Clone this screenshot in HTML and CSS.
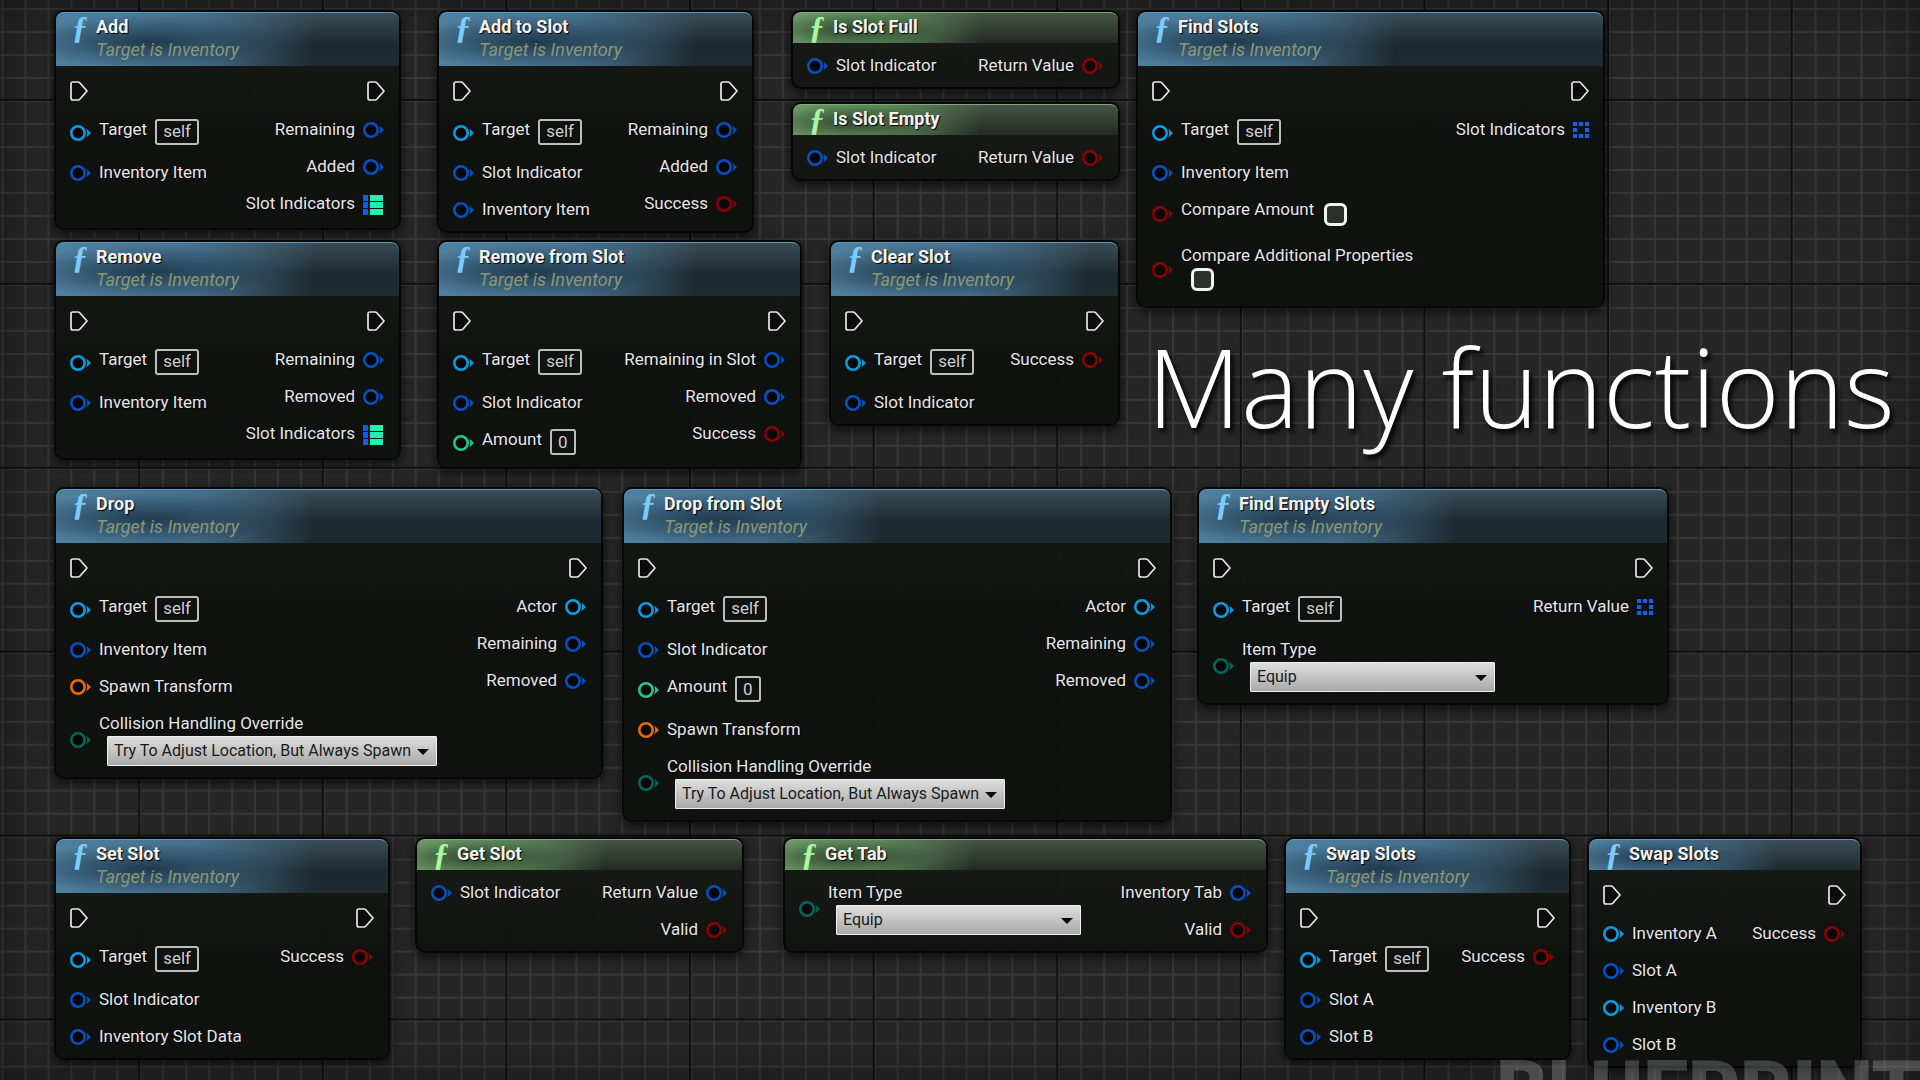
FILE: index.html
```html
<!DOCTYPE html>
<html lang="en">

<head>
    <meta charset="UTF-8">
    <meta name="viewport" content="width=device-width, initial-scale=1.0">
    <title>Inventory Blueprint Functions</title>
    <link rel="stylesheet" href="styles.css">
</head>

<body>

    <!-- shared pin shapes -->
    <svg class="defs" aria-hidden="true">
        <symbol id="exec" viewBox="0 0 18 20">
            <path d="M3 1 H8 Q9 1 10 2 L17 10 L10 18 Q9 19 8 19 H3 Q1 19 1 17 V3 Q1 1 3 1 Z" fill="#0b0c0b" stroke="currentColor" stroke-width="1.7" stroke-linejoin="round"/>
        </symbol>
        <symbol id="pin" viewBox="0 0 21 16">
            <circle cx="8" cy="8" r="6.7" fill="#050606" stroke="currentColor" stroke-width="2.6"/>
            <path d="M16.4 3.6 L21 8 L16.4 12.4 Q18 8 16.4 3.6 Z" fill="currentColor"/>
        </symbol>
        <symbol id="array" viewBox="0 0 16 16">
            <path d="M0 0h4v4h-4z M6 0h4v4h-4z M12 0h4v4h-4z M0 6h4v4h-4z M12 6h4v4h-4z M0 12h4v4h-4z M6 12h4v4h-4z M12 12h4v4h-4z" fill="currentColor"/>
        </symbol>
        <symbol id="map" viewBox="0 0 20 20">
            <path d="M0 0h5v6h-5z M0 7h5v6h-5z M0 14h5v6h-5z" fill="#0b5cf0"/>
            <path d="M7 0h13v6h-13z M7 7h13v6h-13z M7 14h13v6h-13z" fill="#20efb2"/>
        </symbol>
    </svg>

    <main class="graph">

        <svg class="grid" aria-hidden="true">
            <defs>
                <pattern id="minor" x="1.55" y="8.05" width="22.95" height="22.99" patternUnits="userSpaceOnUse">
                    <path d="M0 1 H23 M1 0 V23" stroke="#373737" stroke-width="2"/>
                </pattern>
                <pattern id="major" x="-45.3" y="-84.9" width="183.6" height="183.9" patternUnits="userSpaceOnUse">
                    <path d="M0 1 H184 M1 0 V184" stroke="#101010" stroke-width="2"/>
                </pattern>
            </defs>
            <rect width="100%" height="100%" fill="url(#minor)"/>
            <rect width="100%" height="100%" fill="url(#major)"/>
        </svg>

        <section class="node add">
            <header><i>ƒ</i><h2>Add</h2><p>Target is Inventory</p></header>
            <div class="pins">
                <ul class="in">
                    <li class="exec"><svg><use href="#exec"/></svg></li>
                    <li class="value"><svg class="pin object"><use href="#pin"/></svg><span>Target</span><b>self</b></li>
                    <li><svg class="pin struct"><use href="#pin"/></svg><span>Inventory Item</span></li>
                </ul>
                <ul class="out">
                    <li class="exec"><svg><use href="#exec"/></svg></li>
                    <li><span>Remaining</span><svg class="pin struct"><use href="#pin"/></svg></li>
                    <li><span>Added</span><svg class="pin struct"><use href="#pin"/></svg></li>
                    <li><span>Slot Indicators</span><svg class="map"><use href="#map"/></svg></li>
                </ul>
            </div>
        </section>

        <section class="node add-to-slot">
            <header><i>ƒ</i><h2>Add to Slot</h2><p>Target is Inventory</p></header>
            <div class="pins">
                <ul class="in">
                    <li class="exec"><svg><use href="#exec"/></svg></li>
                    <li class="value"><svg class="pin object"><use href="#pin"/></svg><span>Target</span><b>self</b></li>
                    <li><svg class="pin struct"><use href="#pin"/></svg><span>Slot Indicator</span></li>
                    <li><svg class="pin struct"><use href="#pin"/></svg><span>Inventory Item</span></li>
                </ul>
                <ul class="out">
                    <li class="exec"><svg><use href="#exec"/></svg></li>
                    <li><span>Remaining</span><svg class="pin struct"><use href="#pin"/></svg></li>
                    <li><span>Added</span><svg class="pin struct"><use href="#pin"/></svg></li>
                    <li><span>Success</span><svg class="pin bool"><use href="#pin"/></svg></li>
                </ul>
            </div>
        </section>

        <section class="node pure is-slot-full">
            <header><i>ƒ</i><h2>Is Slot Full</h2></header>
            <div class="pins">
                <ul class="in">
                    <li><svg class="pin struct"><use href="#pin"/></svg><span>Slot Indicator</span></li>
                </ul>
                <ul class="out">
                    <li><span>Return Value</span><svg class="pin bool"><use href="#pin"/></svg></li>
                </ul>
            </div>
        </section>

        <section class="node pure is-slot-empty">
            <header><i>ƒ</i><h2>Is Slot Empty</h2></header>
            <div class="pins">
                <ul class="in">
                    <li><svg class="pin struct"><use href="#pin"/></svg><span>Slot Indicator</span></li>
                </ul>
                <ul class="out">
                    <li><span>Return Value</span><svg class="pin bool"><use href="#pin"/></svg></li>
                </ul>
            </div>
        </section>

        <section class="node find-slots">
            <header><i>ƒ</i><h2>Find Slots</h2><p>Target is Inventory</p></header>
            <div class="pins">
                <ul class="in">
                    <li class="exec"><svg><use href="#exec"/></svg></li>
                    <li class="value"><svg class="pin object"><use href="#pin"/></svg><span>Target</span><b>self</b></li>
                    <li><svg class="pin struct"><use href="#pin"/></svg><span>Inventory Item</span></li>
                    <li class="check"><svg class="pin bool"><use href="#pin"/></svg><label for="compare-amount">Compare Amount</label><input type="checkbox" id="compare-amount"></li>
                    <li class="stacked"><svg class="pin bool"><use href="#pin"/></svg>
                        <div class="field"><label for="compare-props">Compare Additional Properties</label><input type="checkbox" id="compare-props"></div>
                    </li>
                </ul>
                <ul class="out">
                    <li class="exec"><svg><use href="#exec"/></svg></li>
                    <li><span>Slot Indicators</span><svg class="array"><use href="#array"/></svg></li>
                </ul>
            </div>
        </section>

        <section class="node remove">
            <header><i>ƒ</i><h2>Remove</h2><p>Target is Inventory</p></header>
            <div class="pins">
                <ul class="in">
                    <li class="exec"><svg><use href="#exec"/></svg></li>
                    <li class="value"><svg class="pin object"><use href="#pin"/></svg><span>Target</span><b>self</b></li>
                    <li><svg class="pin struct"><use href="#pin"/></svg><span>Inventory Item</span></li>
                </ul>
                <ul class="out">
                    <li class="exec"><svg><use href="#exec"/></svg></li>
                    <li><span>Remaining</span><svg class="pin struct"><use href="#pin"/></svg></li>
                    <li><span>Removed</span><svg class="pin struct"><use href="#pin"/></svg></li>
                    <li><span>Slot Indicators</span><svg class="map"><use href="#map"/></svg></li>
                </ul>
            </div>
        </section>

        <section class="node remove-from-slot">
            <header><i>ƒ</i><h2>Remove from Slot</h2><p>Target is Inventory</p></header>
            <div class="pins">
                <ul class="in">
                    <li class="exec"><svg><use href="#exec"/></svg></li>
                    <li class="value"><svg class="pin object"><use href="#pin"/></svg><span>Target</span><b>self</b></li>
                    <li><svg class="pin struct"><use href="#pin"/></svg><span>Slot Indicator</span></li>
                    <li class="value"><svg class="pin int"><use href="#pin"/></svg><label for="remove-amount">Amount</label><input type="text" id="remove-amount" value="0"></li>
                </ul>
                <ul class="out">
                    <li class="exec"><svg><use href="#exec"/></svg></li>
                    <li><span>Remaining in Slot</span><svg class="pin struct"><use href="#pin"/></svg></li>
                    <li><span>Removed</span><svg class="pin struct"><use href="#pin"/></svg></li>
                    <li><span>Success</span><svg class="pin bool"><use href="#pin"/></svg></li>
                </ul>
            </div>
        </section>

        <section class="node clear-slot">
            <header><i>ƒ</i><h2>Clear Slot</h2><p>Target is Inventory</p></header>
            <div class="pins">
                <ul class="in">
                    <li class="exec"><svg><use href="#exec"/></svg></li>
                    <li class="value"><svg class="pin object"><use href="#pin"/></svg><span>Target</span><b>self</b></li>
                    <li><svg class="pin struct"><use href="#pin"/></svg><span>Slot Indicator</span></li>
                </ul>
                <ul class="out">
                    <li class="exec"><svg><use href="#exec"/></svg></li>
                    <li><span>Success</span><svg class="pin bool"><use href="#pin"/></svg></li>
                </ul>
            </div>
        </section>

        <h1>Many functions</h1>

        <section class="node drop">
            <header><i>ƒ</i><h2>Drop</h2><p>Target is Inventory</p></header>
            <div class="pins">
                <ul class="in">
                    <li class="exec"><svg><use href="#exec"/></svg></li>
                    <li class="value"><svg class="pin object"><use href="#pin"/></svg><span>Target</span><b>self</b></li>
                    <li><svg class="pin struct"><use href="#pin"/></svg><span>Inventory Item</span></li>
                    <li><svg class="pin transform"><use href="#pin"/></svg><span>Spawn Transform</span></li>
                    <li class="stacked"><svg class="pin enum"><use href="#pin"/></svg>
                        <div class="field"><label for="drop-collision">Collision Handling Override</label>
                            <div class="select"><select id="drop-collision"><option>Try To Adjust Location, But Always Spawn</option></select></div>
                        </div>
                    </li>
                </ul>
                <ul class="out">
                    <li class="exec"><svg><use href="#exec"/></svg></li>
                    <li><span>Actor</span><svg class="pin object"><use href="#pin"/></svg></li>
                    <li><span>Remaining</span><svg class="pin struct"><use href="#pin"/></svg></li>
                    <li><span>Removed</span><svg class="pin struct"><use href="#pin"/></svg></li>
                </ul>
            </div>
        </section>

        <section class="node drop-from-slot">
            <header><i>ƒ</i><h2>Drop from Slot</h2><p>Target is Inventory</p></header>
            <div class="pins">
                <ul class="in">
                    <li class="exec"><svg><use href="#exec"/></svg></li>
                    <li class="value"><svg class="pin object"><use href="#pin"/></svg><span>Target</span><b>self</b></li>
                    <li><svg class="pin struct"><use href="#pin"/></svg><span>Slot Indicator</span></li>
                    <li class="value"><svg class="pin int"><use href="#pin"/></svg><label for="drop-amount">Amount</label><input type="text" id="drop-amount" value="0"></li>
                    <li><svg class="pin transform"><use href="#pin"/></svg><span>Spawn Transform</span></li>
                    <li class="stacked"><svg class="pin enum"><use href="#pin"/></svg>
                        <div class="field"><label for="drop-slot-collision">Collision Handling Override</label>
                            <div class="select"><select id="drop-slot-collision"><option>Try To Adjust Location, But Always Spawn</option></select></div>
                        </div>
                    </li>
                </ul>
                <ul class="out">
                    <li class="exec"><svg><use href="#exec"/></svg></li>
                    <li><span>Actor</span><svg class="pin object"><use href="#pin"/></svg></li>
                    <li><span>Remaining</span><svg class="pin struct"><use href="#pin"/></svg></li>
                    <li><span>Removed</span><svg class="pin struct"><use href="#pin"/></svg></li>
                </ul>
            </div>
        </section>

        <section class="node find-empty-slots">
            <header><i>ƒ</i><h2>Find Empty Slots</h2><p>Target is Inventory</p></header>
            <div class="pins">
                <ul class="in">
                    <li class="exec"><svg><use href="#exec"/></svg></li>
                    <li class="value"><svg class="pin object"><use href="#pin"/></svg><span>Target</span><b>self</b></li>
                    <li class="stacked"><svg class="pin enum"><use href="#pin"/></svg>
                        <div class="field"><label for="find-type">Item Type</label>
                            <div class="select"><select id="find-type"><option>Equip</option></select></div>
                        </div>
                    </li>
                </ul>
                <ul class="out">
                    <li class="exec"><svg><use href="#exec"/></svg></li>
                    <li><span>Return Value</span><svg class="array"><use href="#array"/></svg></li>
                </ul>
            </div>
        </section>

        <section class="node set-slot">
            <header><i>ƒ</i><h2>Set Slot</h2><p>Target is Inventory</p></header>
            <div class="pins">
                <ul class="in">
                    <li class="exec"><svg><use href="#exec"/></svg></li>
                    <li class="value"><svg class="pin object"><use href="#pin"/></svg><span>Target</span><b>self</b></li>
                    <li><svg class="pin struct"><use href="#pin"/></svg><span>Slot Indicator</span></li>
                    <li><svg class="pin struct"><use href="#pin"/></svg><span>Inventory Slot Data</span></li>
                </ul>
                <ul class="out">
                    <li class="exec"><svg><use href="#exec"/></svg></li>
                    <li><span>Success</span><svg class="pin bool"><use href="#pin"/></svg></li>
                </ul>
            </div>
        </section>

        <section class="node pure get-slot">
            <header><i>ƒ</i><h2>Get Slot</h2></header>
            <div class="pins">
                <ul class="in">
                    <li><svg class="pin struct"><use href="#pin"/></svg><span>Slot Indicator</span></li>
                </ul>
                <ul class="out">
                    <li><span>Return Value</span><svg class="pin struct"><use href="#pin"/></svg></li>
                    <li><span>Valid</span><svg class="pin bool"><use href="#pin"/></svg></li>
                </ul>
            </div>
        </section>

        <section class="node pure get-tab">
            <header><i>ƒ</i><h2>Get Tab</h2></header>
            <div class="pins">
                <ul class="in">
                    <li class="stacked"><svg class="pin enum"><use href="#pin"/></svg>
                        <div class="field"><label for="tab-type">Item Type</label>
                            <div class="select"><select id="tab-type"><option>Equip</option></select></div>
                        </div>
                    </li>
                </ul>
                <ul class="out">
                    <li><span>Inventory Tab</span><svg class="pin struct"><use href="#pin"/></svg></li>
                    <li><span>Valid</span><svg class="pin bool"><use href="#pin"/></svg></li>
                </ul>
            </div>
        </section>

        <section class="node swap-slots">
            <header><i>ƒ</i><h2>Swap Slots</h2><p>Target is Inventory</p></header>
            <div class="pins">
                <ul class="in">
                    <li class="exec"><svg><use href="#exec"/></svg></li>
                    <li class="value"><svg class="pin object"><use href="#pin"/></svg><span>Target</span><b>self</b></li>
                    <li><svg class="pin struct"><use href="#pin"/></svg><span>Slot A</span></li>
                    <li><svg class="pin struct"><use href="#pin"/></svg><span>Slot B</span></li>
                </ul>
                <ul class="out">
                    <li class="exec"><svg><use href="#exec"/></svg></li>
                    <li><span>Success</span><svg class="pin bool"><use href="#pin"/></svg></li>
                </ul>
            </div>
        </section>

        <section class="node swap-inventories">
            <header><i>ƒ</i><h2>Swap Slots</h2></header>
            <div class="pins">
                <ul class="in">
                    <li class="exec"><svg><use href="#exec"/></svg></li>
                    <li><svg class="pin object"><use href="#pin"/></svg><span>Inventory A</span></li>
                    <li><svg class="pin struct"><use href="#pin"/></svg><span>Slot A</span></li>
                    <li><svg class="pin object"><use href="#pin"/></svg><span>Inventory B</span></li>
                    <li><svg class="pin struct"><use href="#pin"/></svg><span>Slot B</span></li>
                </ul>
                <ul class="out">
                    <li class="exec"><svg><use href="#exec"/></svg></li>
                    <li><span>Success</span><svg class="pin bool"><use href="#pin"/></svg></li>
                </ul>
            </div>
        </section>

        <div class="watermark">BLUEPRINT</div>

    </main>

</body>
</html>
```
FILE: styles.css
```css
* {
    box-sizing: border-box;
}

body {
    margin: 0;
    background-color: #262626;
    color: #e6e6e6;
    font-family: Roboto, "Liberation Sans", sans-serif;
    font-size: 17px;
}

.defs {
    position: absolute;
    width: 0;
    height: 0;
}

.graph {
    position: relative;
    height: 100vh;
    overflow: hidden;
}

.grid {
    display: block;
    width: 100%;
    height: 100%;
}

/* darker edges of the graph */
.graph::before {
    content: "";
    position: absolute;
    inset: 0;
    box-shadow: inset 0 0 50px rgba(0, 0, 0, 0.4);
}

/* nodes */
.node {
    position: absolute;
    border: 2px solid #060707;
    border-radius: 10px;
    background: linear-gradient(rgba(24, 27, 24, 0.95), rgba(15, 17, 15, 0.97) 120px);
    background-clip: padding-box;
    box-shadow: 0 3px 10px 1px rgba(0, 0, 0, 0.6);
}

.node header {
    display: grid;
    grid-template-columns: 24px 1fr;
    grid-auto-rows: 24px;
    height: 54px;
    padding: 2px 16px 0;
    border-top: 1px solid #5a9ac4;
    border-radius: 8px 8px 0 0;
    background:
        radial-gradient(ellipse 140px 26px at 95px 29px, rgba(30, 55, 73, 0.95), rgba(30, 55, 73, 0)),
        linear-gradient(95deg, #4f809f, #456f8c 140px, rgba(69, 111, 140, 0) 260px),
        linear-gradient(#394c56, #1c2930 60%, #1e2b31);
}

.pure header,
.swap-inventories header {
    height: 31px;
}

.swap-inventories header {
    background:
        radial-gradient(ellipse 90px 18px at 60px 17px, rgba(30, 55, 73, 0.9), rgba(30, 55, 73, 0)),
        linear-gradient(95deg, #4f809f, #456f8c 90px, rgba(69, 111, 140, 0) 190px),
        linear-gradient(#394c56, #1e2b31);
}

.pure header {
    border-top-color: #7dab78;
    background:
        radial-gradient(ellipse 90px 18px at 60px 17px, rgba(33, 52, 32, 0.8), rgba(33, 52, 32, 0)),
        linear-gradient(95deg, #6c9a68, #5e8a5b 90px, rgba(94, 138, 91, 0) 190px),
        linear-gradient(#455345, #232b24);
}

header i {
    color: #7ccbfb;
    font: italic bold 32px/24px "Liberation Serif", serif;
}

.pure header i {
    color: #a9f79c;
}

h2 {
    margin: 0;
    font-size: 18px;
    font-weight: 700;
    line-height: 24px;
    color: #f2f2f2;
    text-shadow: 1px 1px 1px #000;
}

header p {
    grid-column: 2;
    margin: 0;
    font-size: 18px;
    font-style: italic;
    line-height: 22px;
    color: #8d9775;
}

.pins {
    display: flex;
    justify-content: space-between;
    padding: 12px 14px 11px;
}

.pins ul {
    display: flex;
    flex-direction: column;
    gap: 16px;
    margin: 0;
    padding: 0;
    list-style: none;
}

.pins li {
    display: flex;
    align-items: center;
    gap: 8px;
    min-height: 21px;
    line-height: 21px;
    white-space: nowrap;
    text-shadow: 1px 1px 1px #000;
}

.out li {
    justify-content: flex-end;
}

.pins span,
.pins label,
.pins b {
    align-self: flex-start;
}

.pins .exec {
    min-height: 25px;
    color: #e8e8e8;
}

.pins .value {
    min-height: 27px;
}

.pins .check {
    min-height: 30px;
}

.pins .stacked {
    min-height: 50px;
}

/* pins */
.exec svg {
    width: 18px;
    height: 20px;
}

.pin {
    width: 21px;
    height: 16px;
}

.out .pin {
    margin-right: 1px;
}

.map {
    width: 20px;
    height: 20px;
    margin: 2px 2px 2px 0;
}

.array {
    width: 16px;
    height: 16px;
    color: #0b63f5;
}

.object {
    color: #0a9ce0;
}

.struct {
    color: #0650c0;
}

.bool {
    color: #8c0202;
}

.int {
    color: #1dcb92;
}

.enum {
    color: #04665a;
}

.transform {
    color: #e86a04;
}

/* values */
.pins b,
.value input {
    height: 26px;
    padding: 0 6px;
    border: 2px solid #bdbdbd;
    border-radius: 3px;
    background: transparent;
    color: #cfcfcf;
    font: 400 17px/21px Roboto, "Liberation Sans", sans-serif;
}

.value input {
    align-self: flex-start;
    width: 26px;
}

.pins input[type="checkbox"] {
    appearance: none;
    width: 23px;
    height: 23px;
    margin: 0 2px;
    border: 3px solid #f2f2f2;
    border-radius: 6px;
    background-color: #2e302e;
}

.field {
    display: flex;
    flex-direction: column;
    gap: 2px;
    align-self: flex-start;
}

.field input[type="checkbox"] {
    margin-left: 10px;
}

.select {
    position: relative;
    margin-left: 8px;
}

.select::after {
    content: "";
    position: absolute;
    top: 13px;
    right: 8px;
    border: 6px solid transparent;
    border-top-color: #0a0a0a;
    border-bottom: 0;
    pointer-events: none;
}

select {
    appearance: none;
    display: block;
    min-width: 245px;
    height: 30px;
    padding: 0 24px 2px 6px;
    border: 1px solid #f0f0f0;
    border-radius: 1px;
    background: linear-gradient(#dedede, #a9a9a9);
    color: #1a1a1a;
    font: 16px Roboto, "Liberation Sans", sans-serif;
}

/* node placement on the canvas */
.add { left: 54px; top: 10px; width: 347px; }
.add-to-slot { left: 437px; top: 10px; width: 317px; }
.is-slot-full { left: 791px; top: 10px; width: 329px; }
.is-slot-empty { left: 791px; top: 102px; width: 329px; }
.find-slots { left: 1136px; top: 10px; width: 469px; }
.remove { left: 54px; top: 240px; width: 347px; }
.remove-from-slot { left: 437px; top: 240px; width: 365px; }
.clear-slot { left: 829px; top: 240px; width: 291px; }
.drop { left: 54px; top: 487px; width: 549px; }
.drop-from-slot { left: 622px; top: 487px; width: 550px; }
.find-empty-slots { left: 1197px; top: 487px; width: 472px; }
.set-slot { left: 54px; top: 837px; width: 336px; }
.get-slot { left: 415px; top: 837px; width: 329px; }
.get-tab { left: 783px; top: 837px; width: 485px; }
.swap-slots { left: 1284px; top: 837px; width: 287px; }
.swap-inventories { left: 1587px; top: 837px; width: 275px; }

h1 {
    position: absolute;
    left: 1147px;
    top: 321px;
    margin: 0;
    font-family: "Open Sans", "Noto Sans", sans-serif;
    font-size: 109px;
    font-weight: 300;
    line-height: 130px;
    color: #fff;
    white-space: nowrap;
    text-shadow: 3px 4px 5px #000;
}

.watermark {
    position: absolute;
    left: 1496px;
    top: 1048px;
    font-size: 80px;
    font-weight: 900;
    line-height: 84px;
    color: rgba(255, 255, 255, 0.2);
}
```
